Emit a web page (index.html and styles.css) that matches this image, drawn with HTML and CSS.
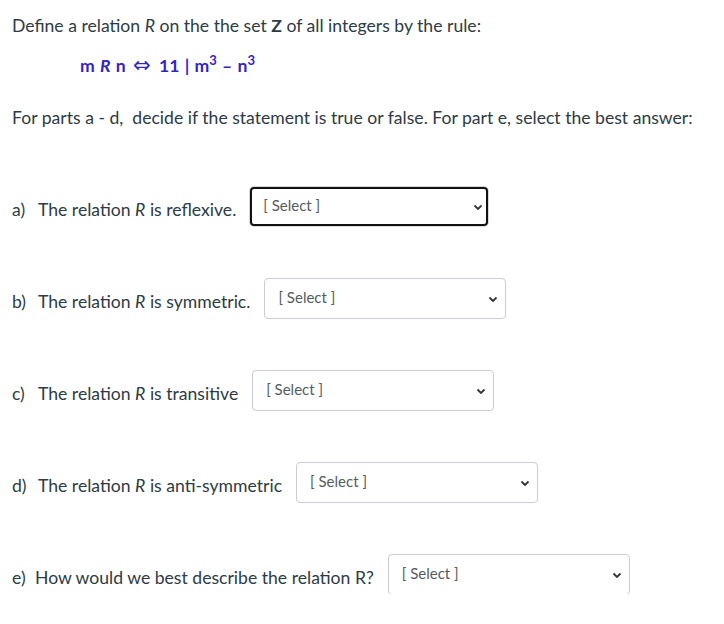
FILE: index.html
```html
<!DOCTYPE html>
<html>
<head>
<meta charset="utf-8">
<link rel="stylesheet" href="styles.css">
</head>
<body>
<div class="page">
  <p class="intro">Define a relation <i>R</i> on the the set <b>Z</b> of all integers by the rule:</p>
  <p class="rule">m <i>R</i> n <span class="iff">⇔</span> 11 | m<sup>3</sup> – n<sup>3</sup></p>
  <p class="instr">For parts a - d,&nbsp; decide if the statement is true or false. For part e, select the best answer:</p>

  <div class="q q-a">
    <span class="lbl">a)</span><span class="txt">The relation <i>R</i> is reflexive.</span>
    <div class="sel focus"><span>[ Select ]</span><svg class="chev" width="10" height="7" viewBox="0 0 10 7"><path d="M1.5 1.5 L5 5 L8.5 1.5" fill="none" stroke="#333" stroke-width="1.8"/></svg></div>
  </div>
  <div class="q">
    <span class="lbl">b)</span><span class="txt">The relation <i>R</i> is symmetric.</span>
    <div class="sel"><span>[ Select ]</span><svg class="chev" width="10" height="7" viewBox="0 0 10 7"><path d="M1.5 1.5 L5 5 L8.5 1.5" fill="none" stroke="#333" stroke-width="1.8"/></svg></div>
  </div>
  <div class="q">
    <span class="lbl">c)</span><span class="txt">The relation <i>R</i> is transitive</span>
    <div class="sel"><span>[ Select ]</span><svg class="chev" width="10" height="7" viewBox="0 0 10 7"><path d="M1.5 1.5 L5 5 L8.5 1.5" fill="none" stroke="#333" stroke-width="1.8"/></svg></div>
  </div>
  <div class="q">
    <span class="lbl">d)</span><span class="txt">The relation <i>R</i> is anti-symmetric</span>
    <div class="sel"><span>[ Select ]</span><svg class="chev" width="10" height="7" viewBox="0 0 10 7"><path d="M1.5 1.5 L5 5 L8.5 1.5" fill="none" stroke="#333" stroke-width="1.8"/></svg></div>
  </div>
  <div class="q">
    <span class="lbl e">e)</span><span class="txt">How would we best describe the relation R?</span>
    <div class="sel"><span>[ Select ]</span><svg class="chev" width="10" height="7" viewBox="0 0 10 7"><path d="M1.5 1.5 L5 5 L8.5 1.5" fill="none" stroke="#333" stroke-width="1.8"/></svg></div>
  </div>
</div>
</body>
</html>
```

FILE: styles.css
```css
html, body {
  margin: 0;
  padding: 0;
  background: #ffffff;
}
body {
  font-family: Lato, "Open Sans", sans-serif;
  font-size: 17.6px;
  color: #2d3b45;
}
.page {
  padding: 15px 0 0 12px;
}
p {
  margin: 0;
}
.intro {
  line-height: 22px;
}
.rule {
  margin-top: 18px;
  margin-left: 68px;
  color: #3224c8;
  font-weight: bold;
  line-height: 22px;
  word-spacing: 1px;
}
.rule i {
  font-weight: bold;
}
.rule sup {
  font-size: 13px;
  font-weight: bold;
  line-height: 0;
  vertical-align: 7px;
}
.iff {
  font-family: "DejaVu Sans", sans-serif;
  font-weight: normal;
  font-size: 21px;
  line-height: 0;
  margin: 0 3px 0 2px;
}
.instr {
  margin-top: 30px;
  line-height: 22px;
}
.q {
  display: flex;
  align-items: center;
  height: 40px;
  margin-top: 52px;
}
.q-a {
  margin-top: 57px;
}
.lbl {
  width: 26px;
  margin-top: 6px;
}
.lbl.e {
  width: 23px;
}
.txt {
  margin-right: 14px;
  margin-top: 6px;
}
.sel {
  box-sizing: border-box;
  width: 242px;
  height: 41px;
  border: 1px solid #c7cdd1;
  border-radius: 4px;
  display: flex;
  align-items: center;
  justify-content: space-between;
  padding: 0 7px 0 13px;
  font-size: 15px;
  color: #555c61;
}
.sel span {
  margin-top: -2px;
}
.sel.focus {
  width: 238px;
  height: 39px;
  border: 2px solid #111;
  box-shadow: 0 0 0 1px #d8d8d8;
  padding-left: 11px;
  padding-right: 3px;
}
.chev {
  margin-top: 2px;
}
```
